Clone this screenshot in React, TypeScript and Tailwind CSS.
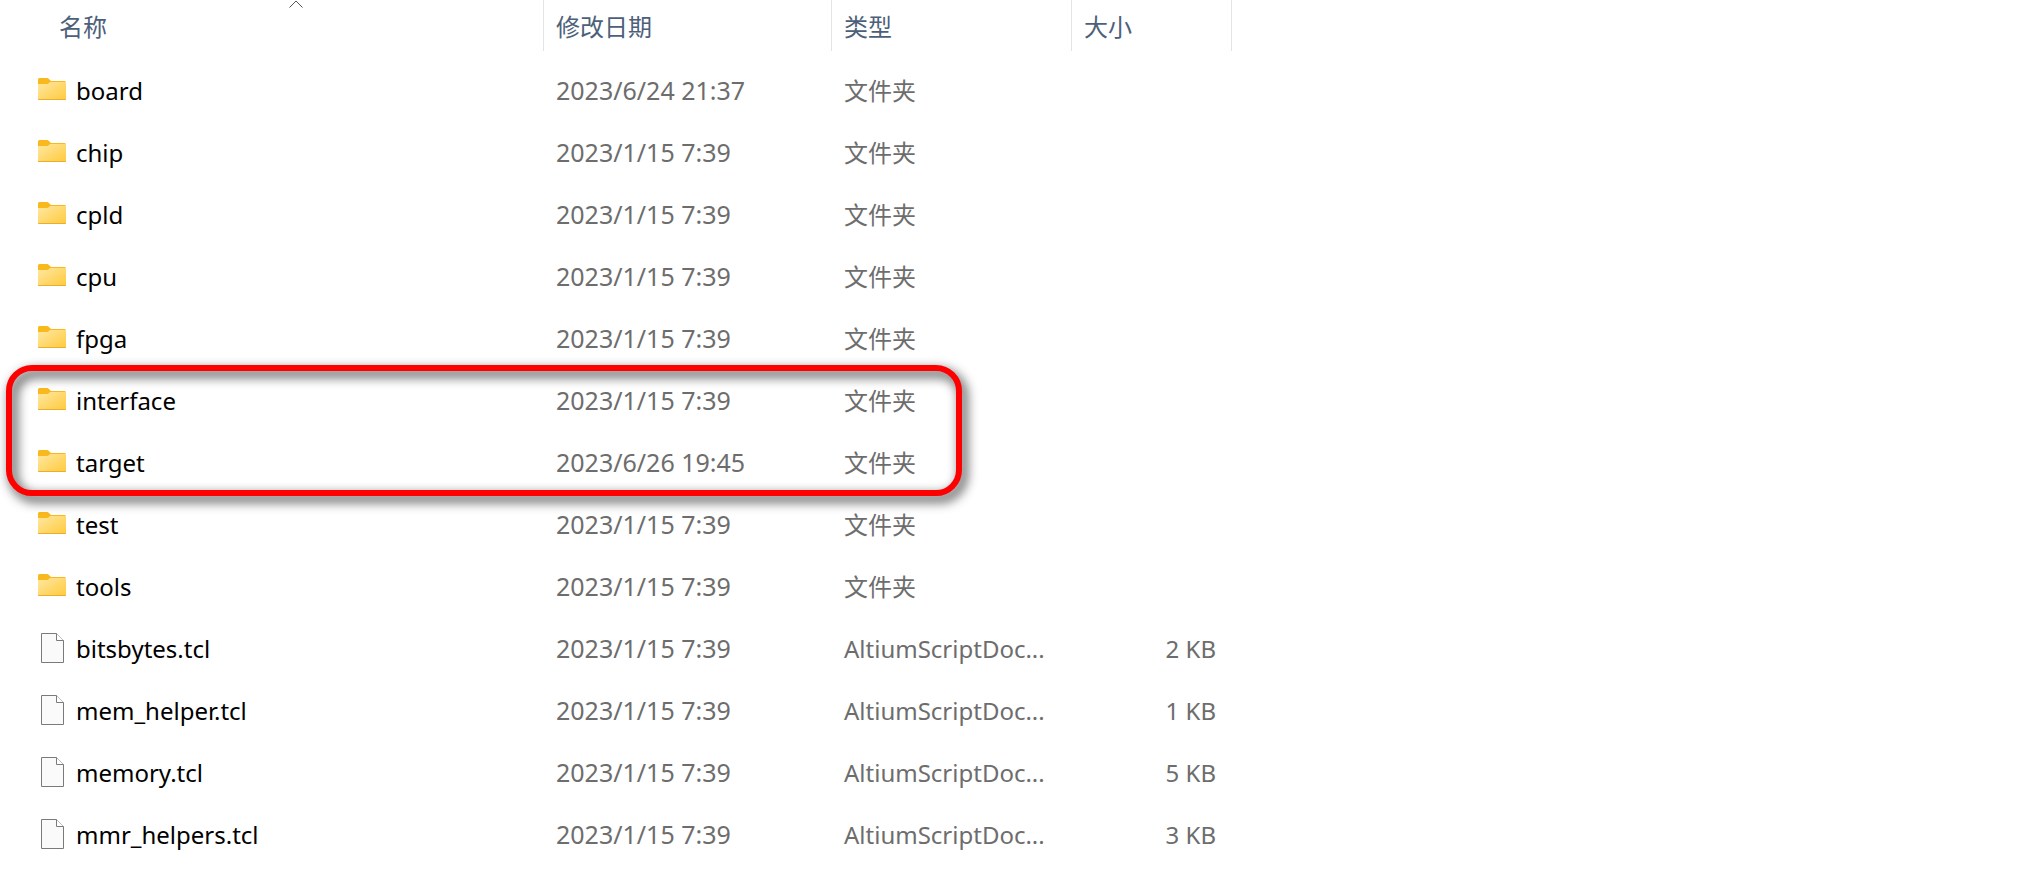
import React from "react";

type Entry = {
  name: string;
  modified: string;
  kind: "folder" | "file";
  size?: string;
};

const entries: Entry[] = [
  { name: "board", modified: "2023/6/24 21:37", kind: "folder" },
  { name: "chip", modified: "2023/1/15 7:39", kind: "folder" },
  { name: "cpld", modified: "2023/1/15 7:39", kind: "folder" },
  { name: "cpu", modified: "2023/1/15 7:39", kind: "folder" },
  { name: "fpga", modified: "2023/1/15 7:39", kind: "folder" },
  { name: "interface", modified: "2023/1/15 7:39", kind: "folder" },
  { name: "target", modified: "2023/6/26 19:45", kind: "folder" },
  { name: "test", modified: "2023/1/15 7:39", kind: "folder" },
  { name: "tools", modified: "2023/1/15 7:39", kind: "folder" },
  { name: "bitsbytes.tcl", modified: "2023/1/15 7:39", kind: "file", size: "2 KB" },
  { name: "mem_helper.tcl", modified: "2023/1/15 7:39", kind: "file", size: "1 KB" },
  { name: "memory.tcl", modified: "2023/1/15 7:39", kind: "file", size: "5 KB" },
  { name: "mmr_helpers.tcl", modified: "2023/1/15 7:39", kind: "file", size: "3 KB" },
];

function FolderIcon() {
  return (
    <svg width="28" height="32" viewBox="0 1 28 32" className="shrink-0" aria-hidden="true">
      <defs>
        <linearGradient id="folderFace" x1="0" y1="0" x2="1" y2="1">
          <stop offset="0" stopColor="#ffe8a3" />
          <stop offset="1" stopColor="#ffca3c" />
        </linearGradient>
      </defs>
      <path d="M0 5.5Q0 4 1.5 4H9Q10 4 10.7 4.7L13 7H26.5Q28 7 28 8.500V12H0Z" fill="#f9b81c" />
      <path d="M0 10H9Q10 10 10.8 9.300L12 8H28V24.500Q28 26 26.500 26H1.500Q0 26 0 24.500Z" fill="url(#folderFace)" />
      <path d="M0 24.500Q0 26 1.500 26H26.500Q28 26 28 24.500L27.500 25H0.500Z" fill="#e8a822" />
      <path d="M0.500 25.500H27.500" stroke="#ecae2a" />
    </svg>
  );
}

function FileIcon() {
  return (
    <svg width="28" height="32" viewBox="0 0 28 32" className="shrink-0" aria-hidden="true">
      <path d="M3.500 0.500H18.500L25.500 7.500V29.500H3.500Z" fill="#fafafa" stroke="#7a7a7a" />
      <path d="M18.500 0.500V7.500H25.500" fill="#ffffff" stroke="#7a7a7a" />
    </svg>
  );
}

const headCell = "h-[51px] border-r border-[#e3e3e3] p-0 text-left align-top font-normal";
const headButton = "block h-[51px] w-full text-left leading-[53px]";

export default function App() {
  return (
    <main className="min-h-screen overflow-x-auto bg-white font-['Noto_Sans','Noto_Sans_CJK_SC',sans-serif] text-2xl text-[#6d6d6d]">
      <div className="relative w-fit">
        <table className="w-[1232px] table-fixed border-separate border-spacing-0">
          <colgroup>
            <col className="w-[544px]" />
            <col className="w-[288px]" />
            <col className="w-[240px]" />
            <col className="w-[160px]" />
          </colgroup>
          <thead className="text-[#4c607a]">
            <tr>
              <th className={headCell} aria-sort="ascending">
                <button type="button" className={`${headButton} relative pl-[59px]`}>
                  名称
                  <svg width="14" height="8" viewBox="0 0 14 8" className="absolute top-0 left-[289px]" aria-hidden="true">
                    <path d="M0.500 7.500L7 1L13.500 7.500" fill="none" stroke="#555555" />
                  </svg>
                </button>
              </th>
              <th className={headCell}>
                <button type="button" className={`${headButton} pl-3`}>修改日期</button>
              </th>
              <th className={headCell}>
                <button type="button" className={`${headButton} pl-3`}>类型</button>
              </th>
              <th className={headCell}>
                <button type="button" className={`${headButton} pl-3`}>大小</button>
              </th>
            </tr>
          </thead>
          <tbody className="before:block before:h-[9px] before:content-['']">
            {entries.map((entry) => (
              <tr key={entry.name} className="h-[62px] whitespace-nowrap">
                <td className="p-0">
                  <div className="flex items-center gap-[10px] pl-[38px] text-black">
                    {entry.kind === "folder" ? <FolderIcon /> : <FileIcon />}
                    <span>{entry.name}</span>
                  </div>
                </td>
                <td className="p-0 pl-3 text-[25px]">{entry.modified}</td>
                <td className="p-0 pl-3">{entry.kind === "folder" ? "文件夹" : "AltiumScriptDoc..."}</td>
                <td className="p-0 pr-4 text-right">{entry.size}</td>
              </tr>
            ))}
          </tbody>
        </table>
        <div className="pointer-events-none absolute top-[365px] left-[6px] h-[131px] w-[956px] rounded-[26px] border-6 border-[#ff0000] drop-shadow-[4px_5px_6px_rgba(0,0,0,0.9)]" />
      </div>
    </main>
  );
}
